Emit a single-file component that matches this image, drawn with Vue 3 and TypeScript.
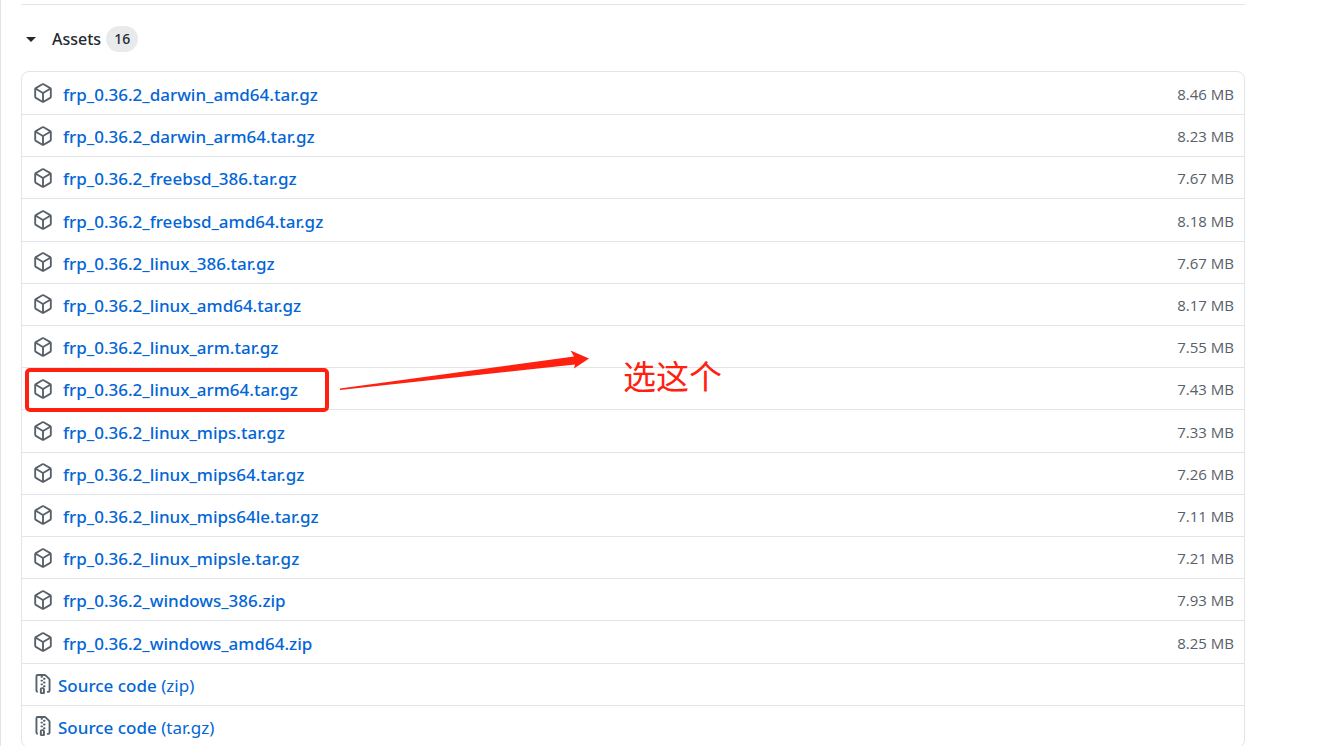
<script setup lang="ts">
import { ref } from 'vue'

interface Asset {
  name: string
  size: string
  picked?: boolean
}

const open = ref(true)

const assets: Asset[] = [
  { name: 'frp_0.36.2_darwin_amd64.tar.gz', size: '8.46 MB' },
  { name: 'frp_0.36.2_darwin_arm64.tar.gz', size: '8.23 MB' },
  { name: 'frp_0.36.2_freebsd_386.tar.gz', size: '7.67 MB' },
  { name: 'frp_0.36.2_freebsd_amd64.tar.gz', size: '8.18 MB' },
  { name: 'frp_0.36.2_linux_386.tar.gz', size: '7.67 MB' },
  { name: 'frp_0.36.2_linux_amd64.tar.gz', size: '8.17 MB' },
  { name: 'frp_0.36.2_linux_arm.tar.gz', size: '7.55 MB' },
  { name: 'frp_0.36.2_linux_arm64.tar.gz', size: '7.43 MB', picked: true },
  { name: 'frp_0.36.2_linux_mips.tar.gz', size: '7.33 MB' },
  { name: 'frp_0.36.2_linux_mips64.tar.gz', size: '7.26 MB' },
  { name: 'frp_0.36.2_linux_mips64le.tar.gz', size: '7.11 MB' },
  { name: 'frp_0.36.2_linux_mipsle.tar.gz', size: '7.21 MB' },
  { name: 'frp_0.36.2_windows_386.zip', size: '7.93 MB' },
  { name: 'frp_0.36.2_windows_amd64.zip', size: '8.25 MB' },
]

const sources: string[] = ['zip', 'tar.gz']
</script>

<template>
  <main class="release">
    <hr class="rule" />
    <button class="toggle" type="button" :aria-expanded="open" aria-controls="assets" @click="open = !open">
      <span class="caret" :class="{ closed: !open }"></span>
      <span class="title">Assets</span>
      <span class="counter">{{ assets.length + sources.length }}</span>
    </button>
    <ul v-show="open" id="assets" class="list">
      <li v-for="asset in assets" :key="asset.name" class="row">
        <svg class="icon" viewBox="0 0 16 16" aria-hidden="true">
          <path fill-rule="evenodd" d="M8.878.392a1.75 1.75 0 00-1.756 0l-5.25 3.045A1.75 1.75 0 001 4.951v6.098c0 .624.332 1.2.872 1.514l5.25 3.045a1.75 1.75 0 001.756 0l5.25-3.045c.54-.313.872-.89.872-1.514V4.951c0-.624-.332-1.2-.872-1.514L8.878.392zM7.875 1.69a.25.25 0 01.25 0l4.63 2.685L8 7.133 3.245 4.375l4.63-2.685zM2.5 5.677v5.372c0 .09.047.171.125.216l4.625 2.683V8.432L2.5 5.677zm6.25 8.271l4.625-2.683a.25.25 0 00.125-.216V5.677L8.75 8.432v5.516z" />
        </svg>
        <a class="link" href="#">{{ asset.name }}</a>
        <span class="size">{{ asset.size }}</span>
        <template v-if="asset.picked">
          <span class="frame"></span>
          <svg class="arrow" viewBox="0 0 250 42" aria-hidden="true">
            <path d="M0 38.6 L234 6.4 L230.5 0.5 L249 8.5 L234 18.5 L235 14.5 L0 40 Z" />
          </svg>
          <span class="note" lang="zh-CN">选这个</span>
        </template>
      </li>
      <li v-for="kind in sources" :key="kind" class="row source">
        <svg class="icon" viewBox="0 0 16 16" aria-hidden="true">
          <path fill-rule="evenodd" d="M3.5 1.75a.25.25 0 01.25-.25h3a.75.75 0 000 1.5h.5a.75.75 0 000-1.5h2.086a.25.25 0 01.177.073l2.914 2.914a.25.25 0 01.073.177v8.586a.25.25 0 01-.25.25h-.5a.75.75 0 000 1.5h.5A1.75 1.75 0 0014 13.25V4.664c0-.464-.184-.909-.513-1.237L10.573.513A1.75 1.75 0 009.336 0H3.75A1.75 1.75 0 002 1.75v11.5c0 .649.353 1.214.874 1.515a.75.75 0 10.752-1.298.25.25 0 01-.126-.217V1.75zM8.75 3a.75.75 0 000 1.5h.5a.75.75 0 000-1.5h-.5zM6 5.25a.75.75 0 01.75-.75h.5a.75.75 0 010 1.5h-.5A.75.75 0 016 5.25zm2 1.5A.75.75 0 018.75 6h.5a.75.75 0 010 1.5h-.5A.75.75 0 018 6.75zm-1.25.75a.75.75 0 000 1.5h.5a.75.75 0 000-1.5h-.5zM8 9.75A.75.75 0 018.75 9h.5a.75.75 0 010 1.5h-.5A.75.75 0 018 9.75zm-.75.75a1.75 1.75 0 00-1.75 1.75v3c0 .414.336.75.75.75h2.5a.75.75 0 00.75-.75v-3a1.75 1.75 0 00-1.75-1.75h-.5zM7 12.25a.25.25 0 01.25-.25h.5a.25.25 0 01.25.25v2.25H7v-2.25z" />
        </svg>
        <a class="link" href="#">Source code <span class="kind">({{ kind }})</span></a>
      </li>
    </ul>
  </main>
</template>

<style>
body {
  margin: 0;
  background: #fff;
}
</style>

<style scoped>
.release {
  box-sizing: border-box;
  display: flex;
  flex-direction: column;
  align-items: stretch;
  min-height: 100vh;
  padding: 4px 74px 0 20px;
  border-left: 1px solid #e1e4e8;
  overflow: hidden;
  font-family: "Segoe UI", "Noto Sans", "Open Sans", sans-serif;
  font-size: 17px;
  line-height: 26px;
  color: #24292e;
}

.rule {
  flex: none;
  width: 100%;
  height: 1px;
  margin: 0;
  border: 0;
  background: #e1e4e8;
}

.toggle {
  display: flex;
  align-items: center;
  align-self: flex-start;
  margin: 20px 0 19px;
  padding: 0 0 0 5px;
  border: 0;
  background: none;
  font: inherit;
  color: inherit;
  cursor: pointer;
}

.caret {
  margin-top: 2px;
  border: 5px solid transparent;
  border-top-color: #24292e;
  border-bottom-width: 0;
}

.caret.closed {
  transform: rotate(-90deg);
}

.title {
  margin-left: 16px;
  padding-top: 1px;
  font-size: 16px;
  font-weight: 500;
}

.counter {
  margin-left: 5px;
  padding: 0 8px;
  border-radius: 13px;
  background: #e8eaec;
  font-size: 14px;
  font-weight: 500;
}

.list {
  display: flex;
  flex: 1;
  flex-direction: column;
  margin: 0 0 -2px;
  padding: 0;
  border: 1px solid #e1e4e8;
  border-radius: 8px;
  list-style: none;
}

.row {
  position: relative;
  box-sizing: border-box;
  display: flex;
  flex: 1 0 auto;
  align-items: center;
  min-height: 42px;
  padding: 0 10px 0 11px;
}

.row + .row {
  border-top: 1px solid #e1e4e8;
}

.icon {
  flex: none;
  width: 20px;
  height: 20px;
  fill: #586069;
}

.link {
  margin-left: 10px;
  padding-top: 3px;
  font-weight: 500;
  color: #0366d6;
  text-decoration: none;
}

.link:hover {
  text-decoration: underline;
}

.source .link {
  margin-left: 5px;
}

.kind {
  font-weight: 400;
}

.size {
  margin-left: auto;
  padding-top: 1px;
  font-family: "Segoe UI", "Open Sans", "Noto Sans", sans-serif;
  font-size: 15px;
  color: #586069;
}

/* Hand-drawn callout laid over the recommended build */
.frame {
  position: absolute;
  top: 0;
  left: 3px;
  box-sizing: border-box;
  width: 304px;
  height: 44px;
  border: 4px solid #ff2010;
  border-radius: 5px;
  pointer-events: none;
  z-index: 1;
}

.arrow {
  position: absolute;
  top: -18px;
  left: 318px;
  width: 250px;
  height: 42px;
  fill: #ff2010;
}

.note {
  position: absolute;
  top: -13px;
  left: 601px;
  font-family: "Microsoft YaHei", "Noto Sans CJK SC", sans-serif;
  font-size: 33px;
  font-weight: 400;
  line-height: 40px;
  white-space: nowrap;
  color: #ff2010;
}
</style>
